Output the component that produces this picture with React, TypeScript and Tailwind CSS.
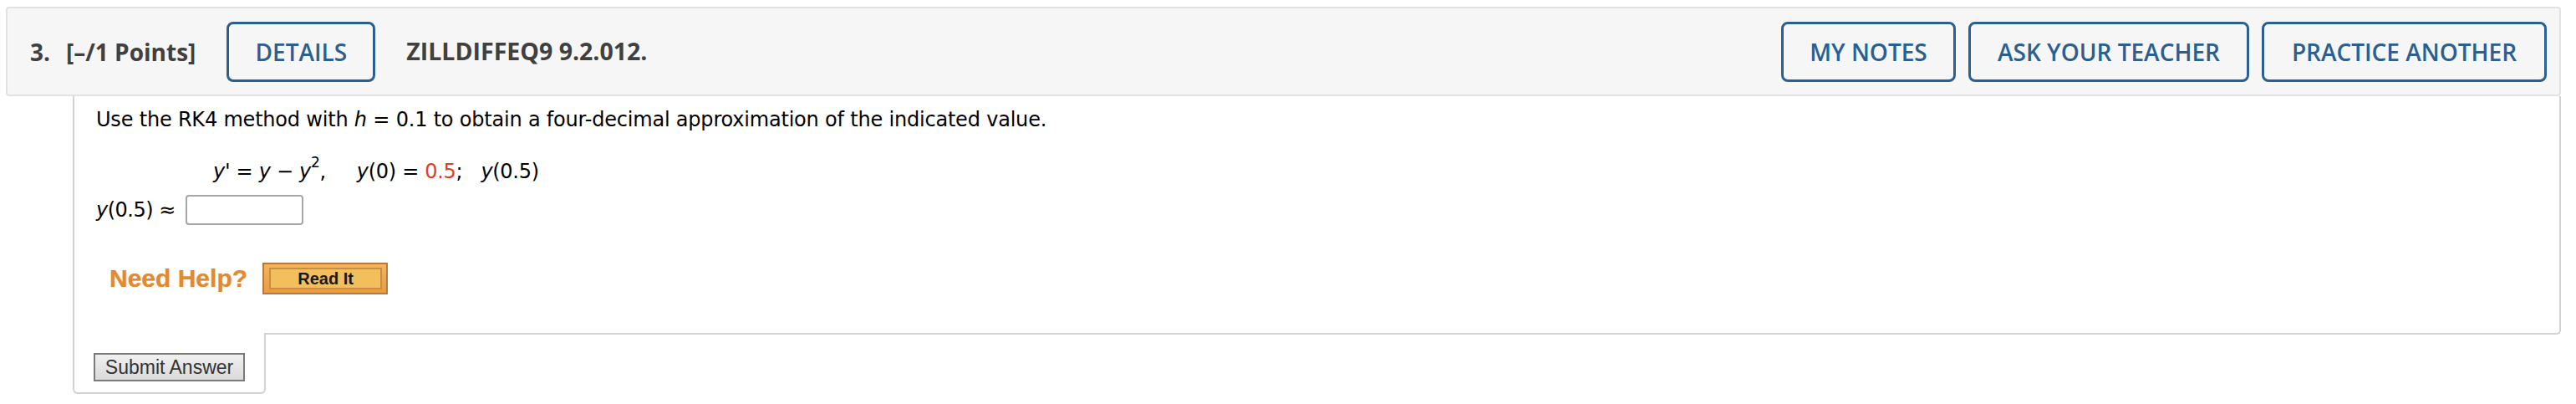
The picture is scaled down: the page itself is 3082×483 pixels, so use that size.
import React from "react";

const headerFont = { fontFamily: '"Open Sans", "Liberation Sans", sans-serif' };

function OutlineButton({ label, w }: { label: string; w: string }) {
  return (
    <div
      className={`${w} h-[72px] shrink-0 flex items-center justify-center border-[3px] border-[#2b5f8f] rounded-[8px] text-[#2b5f8f] text-[28px] font-semibold`}
    >
      {label}
    </div>
  );
}

export default function App() {
  return (
    <div className="w-[3082px] h-[483px] bg-white pt-[8px] pl-[7px] pr-[18px] overflow-hidden">
      {/* Header */}
      <div
        className="h-[107px] flex items-center border-2 border-[#e2e2e2] rounded-[4px] bg-[#f6f6f6] pl-[27px] pr-[15px] text-[#404040]"
        style={headerFont}
      >
        <span className="text-[28px] font-bold">3.</span>
        <span className="text-[28px] font-bold ml-[19px]">[–/1 Points]</span>
        <div className="ml-[37px]">
          <OutlineButton label="DETAILS" w="w-[178px]" />
        </div>
        <span className="text-[28.5px] font-bold ml-[37px]">ZILLDIFFEQ9 9.2.012.</span>
        <div className="ml-auto flex gap-[15px]">
          <OutlineButton label="MY NOTES" w="w-[209px]" />
          <OutlineButton label="ASK YOUR TEACHER" w="w-[336px]" />
          <OutlineButton label="PRACTICE ANOTHER" w="w-[341px]" />
        </div>
      </div>

      {/* Body */}
      <div className="ml-[80px]">
        <div
          className="h-[285px] border-x-2 border-b-2 border-[#d2d2d2] rounded-br-[5px] pl-[26px] pt-[10px] text-black text-[24px] leading-[36px]"
          style={{ fontFamily: '"DejaVu Sans", Verdana, sans-serif' }}
        >
          <div className="tracking-[-0.2px]">
            Use the RK4 method with <i>h</i> = 0.1 to obtain a four-decimal approximation of the indicated value.
          </div>
          <div className="mt-[26px] ml-[140px] whitespace-nowrap tracking-[-0.3px]">
            <i>y'</i> = <i>y</i> − <i>y</i>
            <sup className="text-[17px] relative top-[-13px]">2</sup>,
            <span className="ml-[37px]">
              <i>y</i>(0) = <span className="text-[#e53b2c]">0.5</span>;
            </span>
            <span className="ml-[22px]">
              <i>y</i>(0.5)
            </span>
          </div>
          <div className="mt-[10px] flex items-center h-[36px]">
            <span className="tracking-[-0.5px]">
              <i>y</i>(0.5) ≈
            </span>
            <div className="ml-[12px] w-[141px] h-[36px] border-2 border-[#a6a6a6] rounded-[4px] bg-white" />
          </div>
          <div
            className="mt-[45px] ml-[16px] flex items-center h-[38px]"
            style={{ fontFamily: '"Liberation Sans", Arial, sans-serif' }}
          >
            <span className="text-[30px] font-bold text-[#e4892f] leading-none [text-shadow:0_0_1px_#f0b070]">
              Need Help?
            </span>
            <div className="ml-[18px] w-[150px] h-[38px] border-2 border-[#b8793a] bg-gradient-to-b from-[#f6b45c] to-[#eb9b3d] pl-[6px] pr-[5px] py-[4px]">
              <div className="w-full h-full border-2 border-[#c98e45] bg-[#f2bf5c] flex items-center justify-center text-[20px] font-bold text-[#1a1a1a] leading-none">
                Read It
              </div>
            </div>
          </div>
        </div>

        {/* Submit area */}
        <div className="relative -mt-[2px] w-[231px] h-[73px] bg-white border-x-2 border-b-2 border-[#d2d2d2] rounded-b-[6px] pt-[24px] pl-[23px]">
          <div
            className="w-[181px] h-[34px] border-2 border-[#7a7a7a] bg-gradient-to-b from-[#f0f0f0] to-[#dadada] flex items-center justify-center text-[23px] text-[#333]"
            style={{ fontFamily: '"Liberation Sans", Arial, sans-serif' }}
          >
            Submit Answer
          </div>
        </div>
      </div>
    </div>
  );
}
